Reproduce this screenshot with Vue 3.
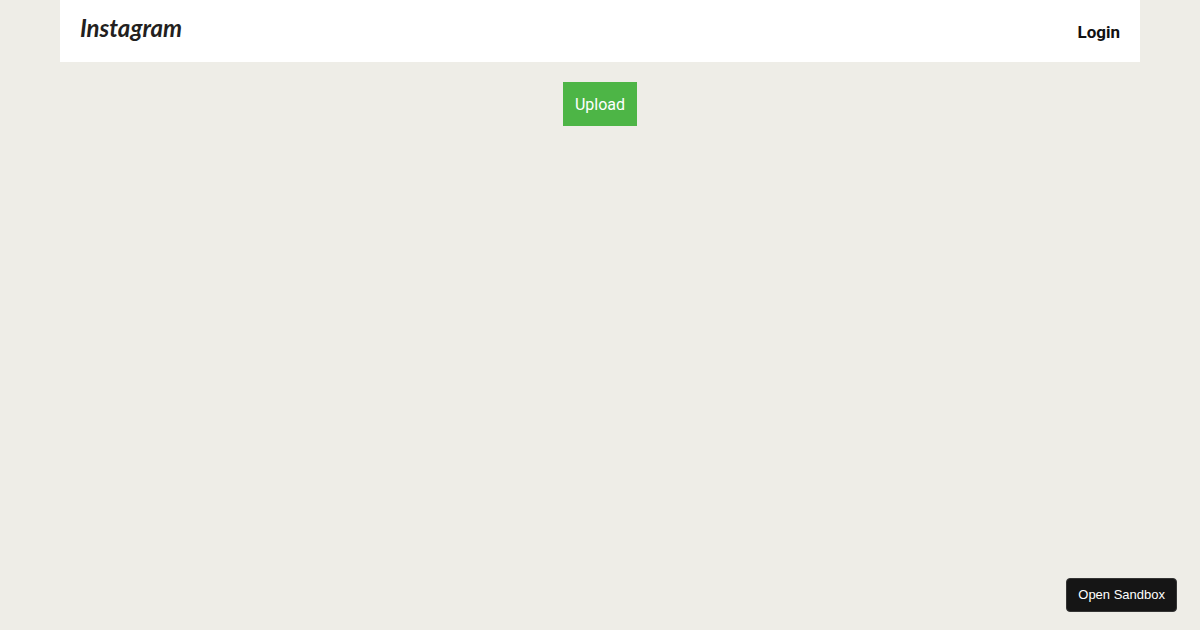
<script setup>
import { ref } from 'vue'

const picker = ref(null)
</script>

<template>
  <div class="page">
    <header class="header">
      <a class="brand" href="#">Instagram</a>
      <a class="login" href="#login">Login</a>
    </header>
    <main class="content">
      <button class="upload" type="button" @click="picker.click()">Upload</button>
      <input ref="picker" type="file" aria-label="Choose a photo" hidden />
    </main>
    <button class="sandbox" type="button">Open Sandbox</button>
  </div>
</template>

<style>
body {
  background: #eeede7;
}
</style>

<style scoped>
.page {
  font-family: Roboto, sans-serif;
  min-height: 100vh;
}

.header {
  box-sizing: border-box;
  max-width: 1080px;
  margin: 0 auto;
  padding: 12px 20px 18px;
  display: flex;
  align-items: flex-start;
  justify-content: space-between;
  background: #fff;
}

.brand {
  font-family: Lato, sans-serif;
  font-size: 24px;
  font-style: italic;
  font-weight: 700;
  line-height: 32px;
  color: #231f20;
  text-decoration: none;
}

.login {
  margin-top: 8px;
  font-size: 17px;
  font-weight: 700;
  line-height: 24px;
  color: #111;
  text-decoration: none;
}

.content {
  display: flex;
  justify-content: center;
  padding: 20px;
}

.upload {
  padding: 13px 12px 11px;
  border: 0;
  background: #4db546;
  color: #fff;
  font-family: inherit;
  font-size: 16px;
  line-height: 20px;
  cursor: pointer;
}

.sandbox {
  position: fixed;
  right: 23px;
  bottom: 18px;
  padding: 8px 11px;
  border: 1px solid #343434;
  border-radius: 4px;
  background: #151515;
  color: #fff;
  font-family: "Liberation Sans", Arial, sans-serif;
  font-size: 13px;
  line-height: 16px;
  cursor: pointer;
}
</style>
